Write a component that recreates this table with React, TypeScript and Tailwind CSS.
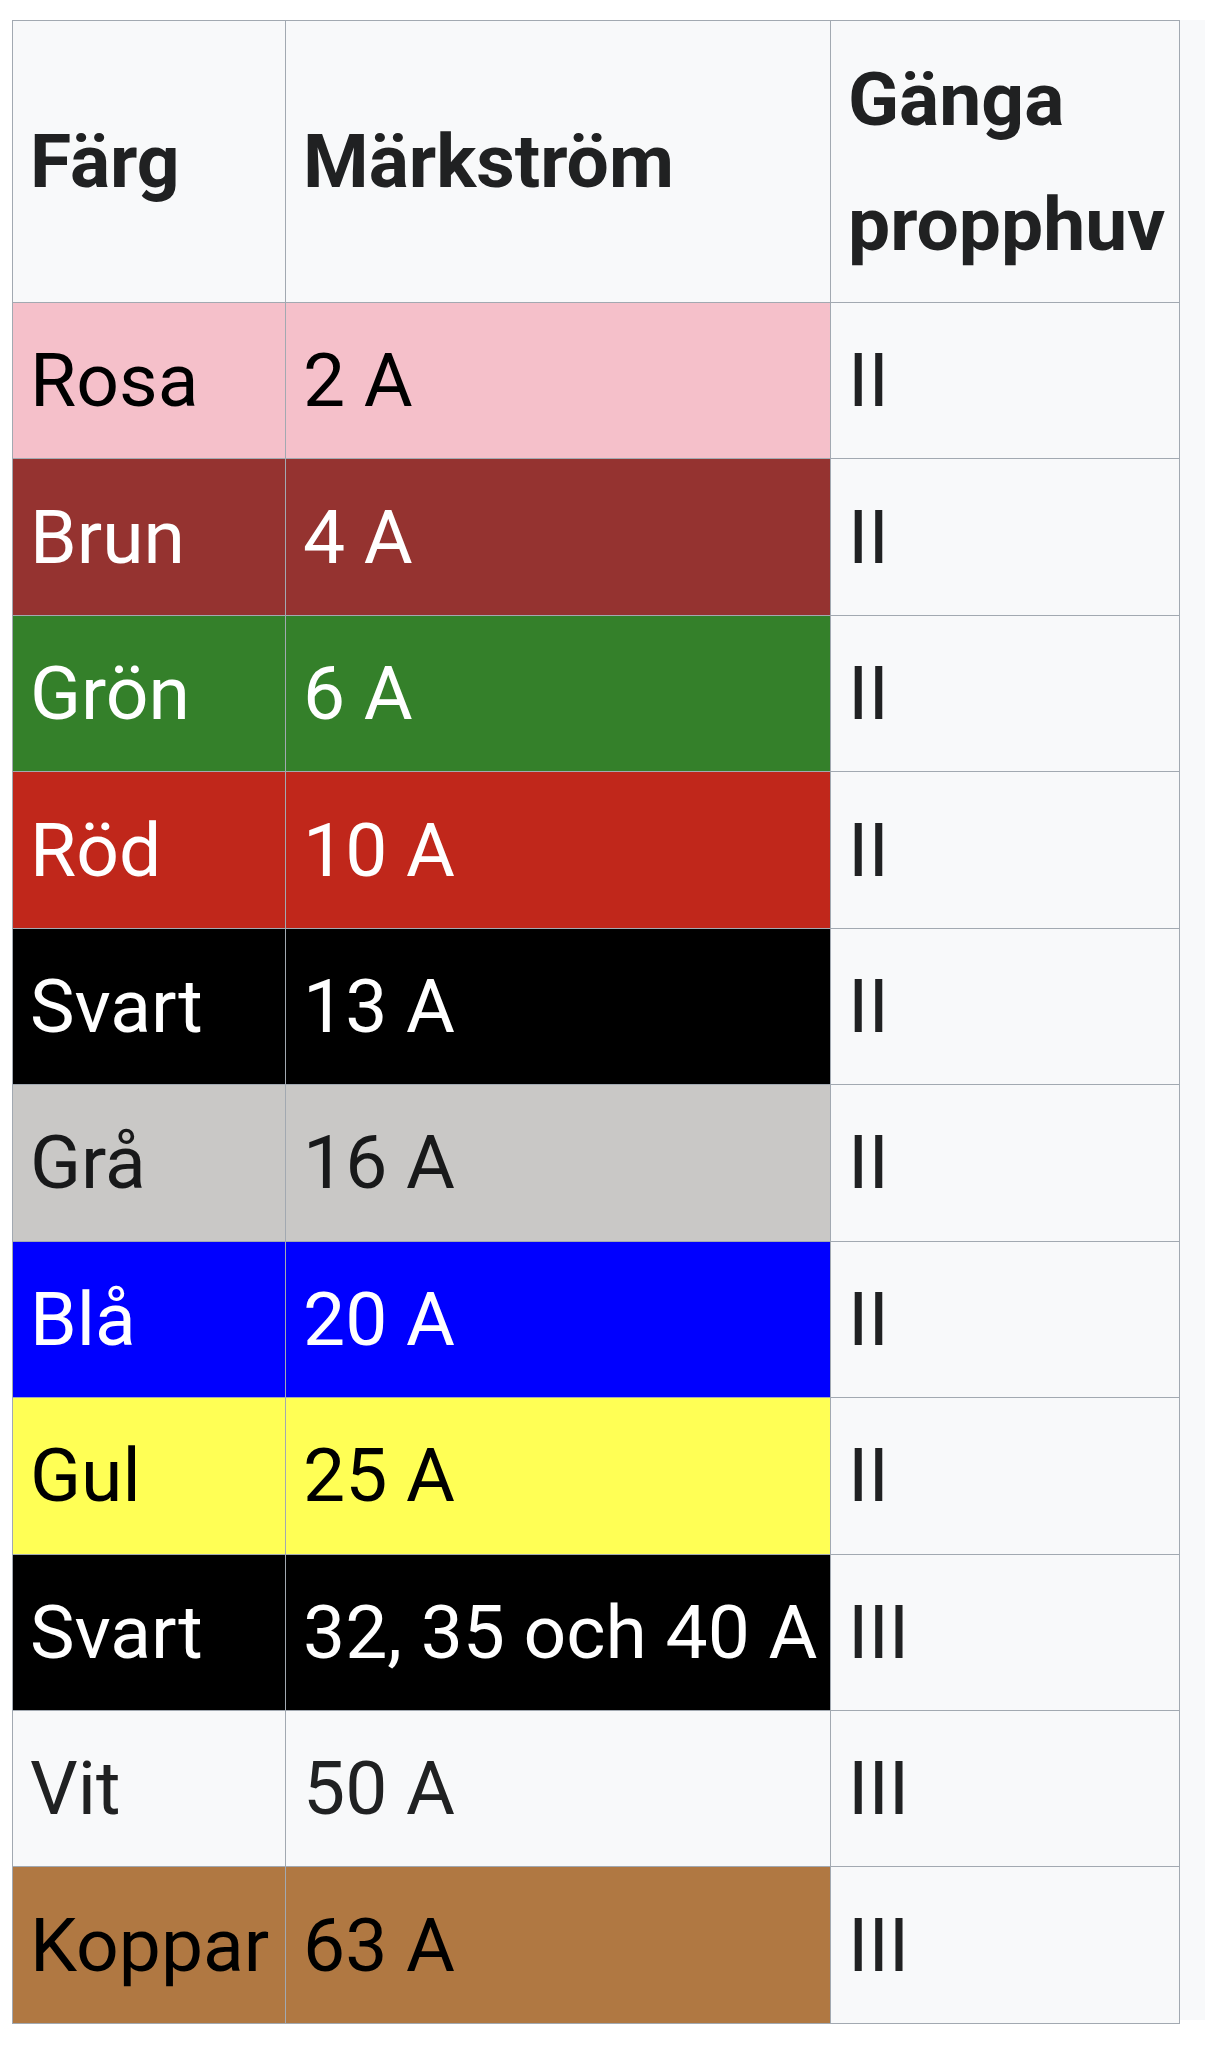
const rows = [
  { color: "Rosa", amp: "2 A", thread: "II", bg: "bg-[#f5c0ca]", fg: "text-black" },
  { color: "Brun", amp: "4 A", thread: "II", bg: "bg-[#953330]", fg: "text-white" },
  { color: "Grön", amp: "6 A", thread: "II", bg: "bg-[#34802a]", fg: "text-white" },
  { color: "Röd", amp: "10 A", thread: "II", bg: "bg-[#c0271b]", fg: "text-white" },
  { color: "Svart", amp: "13 A", thread: "II", bg: "bg-black", fg: "text-white" },
  { color: "Grå", amp: "16 A", thread: "II", bg: "bg-[#c9c8c6]", fg: "text-[#18191a]" },
  { color: "Blå", amp: "20 A", thread: "II", bg: "bg-[#0000ff]", fg: "text-white" },
  { color: "Gul", amp: "25 A", thread: "II", bg: "bg-[#ffff55]", fg: "text-black" },
  { color: "Svart", amp: "32, 35 och 40 A", thread: "III", bg: "bg-black", fg: "text-white" },
  { color: "Vit", amp: "50 A", thread: "III", bg: "bg-[#f8f9fa]", fg: "text-[#202122]" },
  { color: "Koppar", amp: "63 A", thread: "III", bg: "bg-[#b07842]", fg: "text-black" },
];

export default function App() {
  return (
    <div
      className="min-h-[2048px] bg-white pt-[20px] pl-[12px] text-[#202122]"
      style={{ fontFamily: "Roboto, 'Noto Sans', 'Liberation Sans', sans-serif" }}
    >
      <div className="flex">
        {/* tabell: färgkod för proppar */}
        <div className="grid w-[1168px] grid-cols-[272px_544px_348px] grid-rows-[281px_repeat(11,155.45px)] gap-px bg-[#a2a9b1] p-px text-[75px] leading-[125px]">
          <div className="flex items-center bg-[#f8f9fa] px-[17px] font-bold">Färg</div>
          <div className="flex items-center bg-[#f8f9fa] px-[17px] font-bold">Märkström</div>
          <div className="flex items-center bg-[#f8f9fa] px-[17px] font-bold">
            <span>
              Gänga
              <br />
              propphuv
            </span>
          </div>
          {rows.map((r, i) => (
            <div key={i} className="contents">
              <div className={`flex items-center px-[17px] ${r.bg} ${r.fg}`}>{r.color}</div>
              <div className={`flex items-center whitespace-nowrap px-[17px] ${r.bg} ${r.fg}`}>{r.amp}</div>
              <div className="flex items-center bg-[#f8f9fa] px-[17px]">{r.thread}</div>
            </div>
          ))}
        </div>
        <div className="mb-[4px] flex-1 bg-[#f8f9fa]" />
      </div>
    </div>
  );
}
